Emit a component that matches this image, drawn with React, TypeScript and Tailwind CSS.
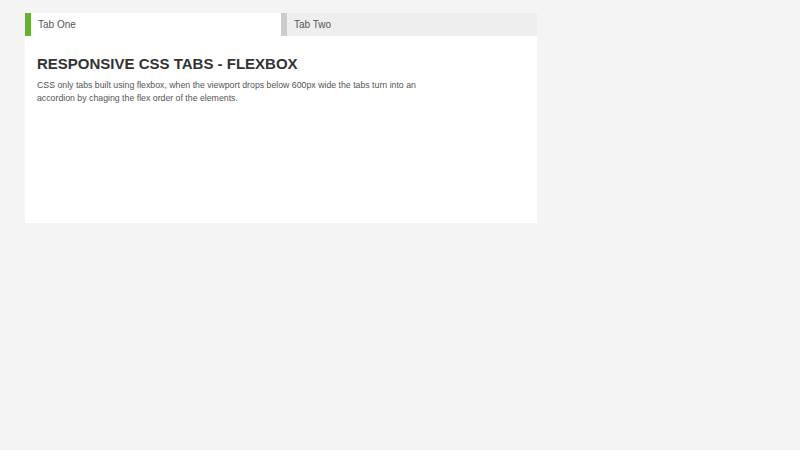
export default function App() {
  return (
    <div className="min-h-[450px] w-full bg-[#f4f4f4] pt-[13px] pl-[25px]" style={{ fontFamily: '"Liberation Sans", Arial, sans-serif' }}>
      <div className="w-[512px] h-[210px] bg-white flex flex-col">
        <div className="flex h-[23px]">
          <div className="flex-1 flex items-center bg-white border-l-[6px] border-[#62b22f] pl-[7px] text-[10px] text-[#555]">Tab One</div>
          <div className="flex-1 flex items-center bg-[#eeeeee] border-l-[6px] border-[#cccccc] pl-[7px] text-[10px] text-[#555]">Tab Two</div>
        </div>
        <div className="px-[12px] pt-[19px]">
          <h1 className="text-[15px] font-bold text-[#333] leading-[18px]">RESPONSIVE CSS TABS - FLEXBOX</h1>
          <p className="mt-[6px] text-[8.75px] leading-[13px] text-[#555] w-[400px]">CSS only tabs built using flexbox, when the viewport drops below 600px wide the tabs turn into an accordion by chaging the flex order of the elements.</p>
        </div>
      </div>
    </div>
  );
}
